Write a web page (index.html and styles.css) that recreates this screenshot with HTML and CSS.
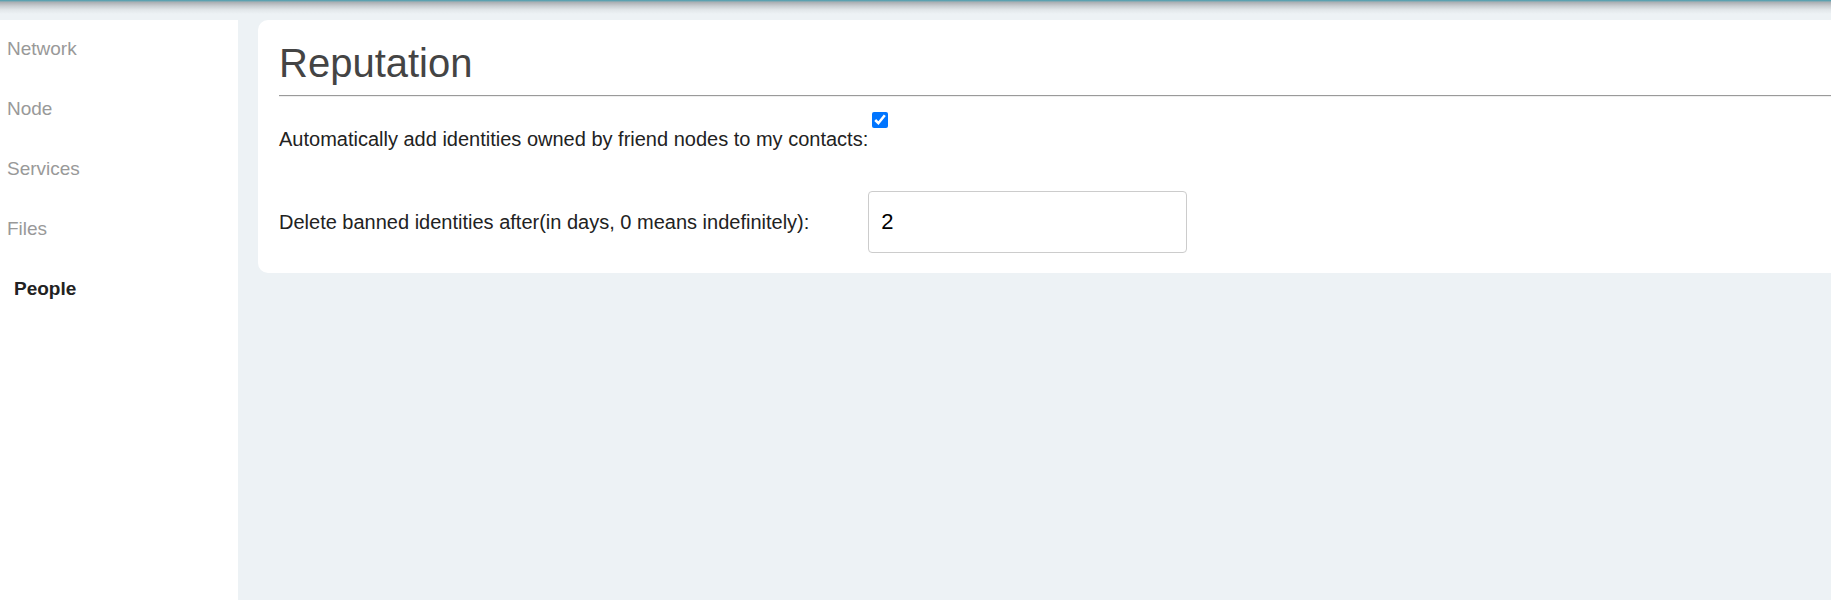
FILE: index.html
```html
<!DOCTYPE html>
<html lang="en">
<head>
<meta charset="utf-8">
<title>Reputation</title>
<link rel="stylesheet" href="styles.css">
</head>
<body>
<div class="topbar"></div>
<div class="layout">
  <nav class="sidebar">
    <div class="nav-item">Network</div>
    <div class="nav-item">Node</div>
    <div class="nav-item">Services</div>
    <div class="nav-item">Files</div>
    <div class="nav-item active">People</div>
  </nav>
  <main class="main">
    <section class="panel">
      <h1 class="title">Reputation</h1>
      <hr class="rule">
      <div class="form">
        <label class="label label-top" for="auto">Automatically add identities owned by friend nodes to my contacts:</label>
        <div class="control control-top"><input id="auto" class="check" type="checkbox" checked></div>
        <label class="label" for="days">Delete banned identities after(in days, 0 means indefinitely):</label>
        <div class="control"><input id="days" class="num" type="text" value="2"></div>
      </div>
    </section>
  </main>
</div>
</body>
</html>
```

FILE: styles.css
```css
html, body {
  margin: 0;
  padding: 0;
  height: 100%;
}
body {
  background: #edf2f5;
  font-family: "Liberation Sans", Arial, sans-serif;
  overflow: hidden;
}
.topbar {
  height: 20px;
  background: linear-gradient(to bottom, #4f9bab 0px, #6aa7b4 1px, #a9adb1 2px, #c9ced2 6px, #e2e7ea 10px, #edf2f5 14px);
}
.layout {
  display: flex;
  height: 580px;
}
.sidebar {
  width: 238px;
  flex: none;
  background: #ffffff;
}
.nav-item {
  font-size: 19px;
  line-height: 22px;
  padding: 18px 0 20px 7px;
  color: #999999;
}
.nav-item.active {
  padding-left: 14px;
  font-weight: bold;
  color: #222222;
}
.main {
  flex: 1;
  padding-left: 20px;
  min-width: 0;
}
.panel {
  background: #ffffff;
  border-radius: 10px;
  margin-right: -30px;
  padding: 20px 0 20px 21px;
}
.title {
  margin: 0;
  font-size: 40px;
  line-height: 46px;
  font-weight: normal;
  color: #444444;
}
.rule {
  margin: 9px 0 0 0;
  height: 0;
  border: 0;
  border-top: 1px solid #9a9a9a;
  border-bottom: 1px solid #efefef;
}
.form {
  display: grid;
  grid-template-columns: auto 1fr;
  row-gap: 40px;
  margin-top: 11px;
  align-items: center;
}
.label {
  font-size: 20px;
  line-height: 23px;
  color: #222222;
}
.label-top {
  align-self: start;
  padding-top: 20px;
}
.control {
  display: flex;
}
.control-top {
  align-self: start;
}
.check {
  width: 16px;
  height: 16px;
  margin: 4px 3px 2px 4px;
  accent-color: #0075ff;
}
.num {
  box-sizing: border-box;
  width: 319px;
  height: 62px;
  margin: 0;
  border: 1px solid #cccccc;
  border-radius: 4px;
  padding: 0 12px;
  font-family: "Liberation Sans", Arial, sans-serif;
  font-size: 22px;
  color: #000000;
  background: #ffffff;
  outline: none;
}
```
